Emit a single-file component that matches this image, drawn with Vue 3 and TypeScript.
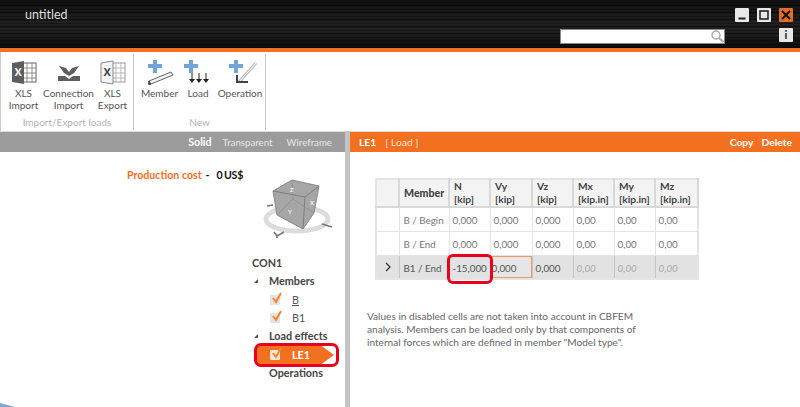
<script setup lang="ts">
interface Row { name: string; vals: string[]; active?: boolean }
const heads: [string, string][] = [['N','[kip]'],['Vy','[kip]'],['Vz','[kip]'],['Mx','[kip.in]'],['My','[kip.in]'],['Mz','[kip.in]']]
const rows: Row[] = [
  { name: 'B / Begin', vals: ['0,000','0,000','0,000','0,00','0,00','0,00'] },
  { name: 'B / End', vals: ['0,000','0,000','0,000','0,00','0,00','0,00'] },
  { name: 'B1 / End', vals: ['-15,000','0,000','0,000','0,00','0,00','0,00'], active: true },
]
</script>

<template>
  <div class="app">
    <header class="titlebar">
      <div class="title">untitled</div>
      <div class="win">
        <div class="winbtns">
          <span class="wb"><svg width="14" height="14" viewBox="0 0 14 14"><path d="M3.500 10.500h7" stroke="#222" stroke-width="2"/></svg></span>
          <span class="wb"><svg width="14" height="14" viewBox="0 0 14 14"><rect x="3" y="3" width="8" height="8" fill="none" stroke="#222" stroke-width="1.600"/></svg></span>
          <span class="wb close"><svg width="14" height="14" viewBox="0 0 14 14"><path d="M3 3l8 8M11 3l-8 8" stroke="#111" stroke-width="2"/></svg></span>
        </div>
        <div class="searchrow">
          <div class="search"><svg width="14" height="14" viewBox="0 0 14 14"><circle cx="6" cy="6" r="4" fill="none" stroke="#aaa" stroke-width="1.500"/><path d="M9 9l4.500 4" stroke="#aaa" stroke-width="2"/></svg></div>
          <span class="wb info">i</span>
        </div>
      </div>
    </header>
    <div class="ribbon">
      <section class="group g1">
        <div class="tools">
          <div class="tool t-xi">
            <svg width="26" height="26" viewBox="0 0 26 26"><rect x="11" y="3" width="14" height="19" fill="#fff" stroke="#666"/><path d="M16 3v19M21 3v19M11 8h14M11 13h14M11 18h14" stroke="#777" stroke-width=".8"/><path d="M1 3l12-2v23L1 22z" fill="#5e5e5e"/><text x="3.500" y="16" class="xl">X</text></svg>
            <span>XLS<br>Import</span>
          </div>
          <div class="tool t-ci">
            <svg width="26" height="26" viewBox="0 0 26 26"><path d="M2 16v5h22v-5h-7l-4 3-4-3z" fill="#5e5e5e"/><path d="M3 6l7 2 3 4 3-4 7-2-5 7-5 3-5-3z" fill="#5e5e5e"/></svg>
            <span>Connection<br>Import</span>
          </div>
          <div class="tool t-xe">
            <svg width="26" height="26" viewBox="0 0 26 26"><rect x="11" y="3" width="14" height="19" fill="#fff" stroke="#999"/><path d="M16 3v19M21 3v19M11 8h14M11 13h14M11 18h14" stroke="#aaa" stroke-width=".8"/><path d="M1 3l12-2v23L1 22z" fill="#f4f4f4" stroke="#888"/><text x="3.500" y="16" class="xl dark">X</text></svg>
            <span>XLS<br>Export</span>
          </div>
        </div>
        <div class="glabel">Import/Export loads</div>
      </section>
      <section class="group g2">
        <div class="tools">
          <div class="tool t-m">
            <svg width="30" height="26" viewBox="0 0 30 26"><path d="M8 0h4v4h5v4h-5v5H8V8H3V4h5z" fill="#6fa5d8"/><path d="M4 21l22-9 2 3-22 9z" fill="#f2f2f2" stroke="#666"/><path d="M4 21v3h2" fill="none" stroke="#333" stroke-width="1.500"/></svg>
            <span>Member</span>
          </div>
          <div class="tool t-l">
            <svg width="26" height="26" viewBox="0 0 26 26"><path d="M4 0h4v4h5v4H8v5H4V8H-1V4h5z" fill="#6fa5d8"/><path d="M7 13v8M14 13v8M21 13v8" stroke="#222"/><path d="M4 19l3 4 3-4zM11 19l3 4 3-4zM18 19l3 4 3-4z" fill="#222"/></svg>
            <span>Load</span>
          </div>
          <div class="tool t-o">
            <svg width="30" height="26" viewBox="0 0 30 26"><g transform="translate(2 0)"><path d="M7 0h4v4h5v4h-5v5H7V8H2V4h5z" fill="#6fa5d8"/><path d="M12 22L29 3" stroke="#bbb" stroke-width="3"/><path d="M12 22L29 3" stroke="#fff" stroke-width="1"/><path d="M10 15v7h11" fill="none" stroke="#444" stroke-width="2"/></g></svg>
            <span>Operation</span>
          </div>
        </div>
        <div class="glabel">New</div>
      </section>
    </div>
    <main class="content">
      <div class="left">
        <div class="lhead"><b>Solid</b><span>Transparent</span><span>Wireframe</span></div>
        <div class="lbody">
          <div class="cost"><span class="o">Production cost</span><i>-</i><b>0 US$</b></div>
          <svg class="cube" width="76" height="62" viewBox="0 0 76 62">
            <ellipse cx="37" cy="42" rx="31" ry="12" fill="none" stroke="#dcdcdc" stroke-width="5"/>
            <path d="M13 14L32 3l27 6-5 27-11 16-26-14z" fill="#a6a6a6" stroke="#8a8a8a"/>
            <path d="M13 14l32 6 14-11M45 20l-2 32" fill="none" stroke="#7d7d7d"/>
            <path d="M32 3l1 19M17 38l16-16 21 14" fill="none" stroke="#8e8e8e" stroke-width=".8"/>
            <path d="M7 29l6-1M62 47l10 3M24 55l-7 4M17 59l-3-4M17 59v2" stroke="#777" stroke-width="1.700" fill="none"/>
            <text x="28" y="37" class="ax">Y</text>
            <text x="30" y="15" class="ax">Z</text>
            <text x="50" y="28" class="ax">X</text>
          </svg>
          <div class="tree">
            <div class="con">CON1</div>
            <div class="node"><em class="tri"></em>Members</div>
            <div class="leaf"><span class="chk"><svg width="12" height="12" viewBox="0 0 12 12"><path d="M2 6l3 4 5-9" fill="none" stroke="#f5842b" stroke-width="2"/></svg></span><u>B</u></div>
            <div class="leaf"><span class="chk"><svg width="12" height="12" viewBox="0 0 12 12"><path d="M2 6l3 4 5-9" fill="none" stroke="#f5842b" stroke-width="2"/></svg></span>B1</div>
            <div class="node"><em class="tri"></em>Load effects</div>
            <div class="sel">
              <span class="chk on"><svg width="12" height="12" viewBox="0 0 12 12"><path d="M2 6l3 4 5-9" fill="none" stroke="#f5842b" stroke-width="2"/></svg></span><span class="seltext">LE1</span>
              <span class="ring"></span>
            </div>
            <div class="node plain">Operations</div>
          </div>
        </div>
        <span class="corner"></span>
      </div>
      <div class="right">
        <div class="rhead"><b>LE1</b><span class="typ">[ Load ]</span><span class="acts"><b>Copy</b><b>Delete</b></span></div>
        <div class="rbody">
          <div class="tablewrap">
            <table>
              <colgroup><col class="c0"><col class="c1"><col class="c2"><col class="c3"><col class="c4"><col class="c5"><col class="c6"><col class="c7"></colgroup>
              <thead>
                <tr>
                  <th></th><th class="mem">Member</th>
                  <th v-for="h in heads" :key="h[0]">{{ h[0] }}<br>{{ h[1] }}</th>
                </tr>
              </thead>
              <tbody>
                <tr v-for="r in rows" :key="r.name" :class="{ act: r.active }">
                  <td class="ind"><svg v-if="r.active" width="8" height="10" viewBox="0 0 8 10"><path d="M2 1l4 4-4 4" fill="none" stroke="#333" stroke-width="1.300"/></svg></td>
                  <td>{{ r.name }}</td>
                  <td v-for="(v, i) in r.vals" :key="i" :class="{ dis: r.active && i > 2, cur: r.active && i === 1 }">{{ v }}<span v-if="r.active && i === 0" class="ring2"></span></td>
                </tr>
              </tbody>
            </table>
          </div>
          <p class="note">Values in disabled cells are not taken into account in CBFEM analysis. Members can be loaded only by that components of internal forces which are defined in member "Model type".</p>
        </div>
      </div>
    </main>
  </div>
</template>

<style scoped>
.app { width: 800px; height: 407px; overflow: hidden; display: flex; flex-direction: column; background: #fff; font-family: Lato, "Open Sans", sans-serif; color: #444; }
.titlebar { height: 48px; flex: none; display: flex; justify-content: space-between; border-bottom: 4px solid #f37021; box-sizing: content-box;
  background:
    linear-gradient(180deg, rgba(0,0,0,.55) 0, rgba(0,0,0,.05) 45%, rgba(0,0,0,.05) 70%, rgba(0,0,0,.7) 100%),
    repeating-linear-gradient(180deg, #171717 0, #303030 1px, #121212 2px, #2a2a2a 4px, #0e0e0e 5px, #202020 7px); }
.title { color: #ddd; font-size: 12.5px; padding: 7px 0 0 25px; }
.win { width: 240px; display: flex; flex-direction: column; align-items: flex-end; padding: 8px 7px 0 0; box-sizing: border-box; }
.winbtns { display: flex; gap: 8px; }
.wb { width: 14px; height: 14px; background: #e8e8e8; border-radius: 1px; display: block; }
.wb svg { display: block; }
.wb.close { background: #e46c24; }
.searchrow { display: flex; margin-top: 6px; gap: 54px; align-items: flex-start; }
.search { width: 165px; height: 15px; margin-top: 1px; background: #fff; border: 1px solid #888; box-sizing: border-box; display: flex; justify-content: flex-end; }
.search svg { margin-top: -1px; }
.info { font-size: 11px; line-height: 14px; text-align: center; font-weight: 900; color: #333; }
.ribbon { height: 79px; flex: none; display: flex; background: #fff; box-sizing: border-box; border-left: 1px solid #ccc; }
.group { display: flex; flex-direction: column; border-right: 1px solid #c8c8c8; margin-top: 2px; height: 76px; box-sizing: border-box; }
.g1 { width: 133px; }
.g2 { width: 132px; }
.tools { flex: 1; display: flex; padding-top: 6px; }
.tool { display: flex; flex-direction: column; align-items: center; font-size: 10px; line-height: 12px; text-align: center; color: #555; }
.tool svg { margin-bottom: 1px; overflow: visible; flex: none; }
.t-xi { width: 43px; margin-left: 1px; }
.t-ci { width: 47px; }
.t-xe { width: 41px; }
.t-m { width: 49px; margin-left: 1px; }
.t-l { width: 28px; margin-left: 0; }
.t-o { width: 50px; margin-left: 3px; }
.xl { font: 700 11px "Open Sans", sans-serif; fill: #fff; }
.xl.dark { fill: #444; }
.glabel { font-size: 10px; color: #b4b4b4; text-align: center; height: 14px; line-height: 12px; }
.content { flex: 1; display: flex; min-height: 0; }
.left { width: 345px; flex: none; display: flex; flex-direction: column; position: relative; }
.lhead { height: 21px; background: #9c9c9c; color: #e6e6e6; font-size: 9.7px; display: flex; justify-content: flex-end; align-items: center; gap: 14px; padding-right: 13px; border-top: 1px solid #ddd; box-sizing: border-box; }
.lhead b { color: #fff; font-weight: 700; font-size: 10.6px; margin-right: -3px; }
.lbody { flex: 1; position: relative; }
.cost { position: absolute; left: 127px; top: 17px; font-size: 10.6px; font-weight: 700; display: flex; gap: 4px; color: #111; }
.cost .o { color: #f37021; font-weight: 700; }
.cost i { font-style: normal; margin-right: 3px; }
.cost b { font-weight: 700; letter-spacing: -.2px; word-spacing: -1px; }
.cube { position: absolute; left: 260px; top: 25px; overflow: visible; }
.ax { font: 700 6px Lato, sans-serif; fill: #f2f2f2; }
.tree { position: absolute; left: 252px; top: 102px; width: 90px; font-size: 10.8px; font-weight: 700; color: #444; }
.con { height: 18px; line-height: 18px; }
.node { height: 19px; line-height: 17px; padding-left: 17px; position: relative; white-space: nowrap; }
.plain { height: 18px; line-height: 15px; }
.tri { position: absolute; left: 2px; top: 7px; border-style: solid; border-width: 0 0 4px 4px; border-color: transparent transparent #555 transparent; }
.leaf { height: 18px; line-height: 18px; font-weight: 400; display: flex; align-items: center; padding-left: 18px; color: #555; }
.leaf u { text-decoration: underline; }
.chk { width: 10px; height: 10px; background: #e4e4e4; border-radius: 1px; display: inline-block; margin-right: 12px; position: relative; flex: none; }
.chk svg { position: absolute; left: 1px; top: -3px; }
.sel { position: relative; height: 18px; line-height: 18px; margin: 0 0 1px 5px; width: 77px; color: #fff; padding-left: 13px; box-sizing: border-box; display: flex; align-items: center; }
.sel::before { content: ""; position: absolute; inset: 0; background: #f37021; clip-path: polygon(0 0, 84% 0, 100% 50%, 84% 100%, 0 100%); }
.seltext { position: relative; }
.chk.on { background: #fbe6d6; }
.ring { position: absolute; left: -3px; top: -3px; width: 85px; height: 24px; box-sizing: border-box; border: 3px solid #e8001c; border-radius: 7px; z-index: 2; }
.corner { position: absolute; left: 0; bottom: 0; width: 15px; height: 4px; background: #7fa6d0; clip-path: polygon(0 0, 100% 100%, 0 100%); }
.right { flex: 1; border-left: 5px solid #c4c4c4; display: flex; flex-direction: column; }
.rhead { height: 21px; background: #f37021; color: #fff; font-size: 10.3px; display: flex; align-items: center; padding: 0 8px 0 9px; border-top: 1px solid #ddd; box-sizing: border-box; }
.typ { margin-left: 9px; color: #fde3d2; }
.acts { margin-left: auto; display: flex; gap: 8px; }
.rbody { flex: 1; padding: 26px 0 0 17px; }
.tablewrap { margin-left: 8px; width: 322px; }
table { border-collapse: collapse; table-layout: fixed; width: 322px; font-size: 9.8px; color: #777; border: 2px solid #e4e4e4; }
.c0 { width: 23px; } .c1 { width: 50px; } .c2 { width: 41px; } .c3 { width: 42px; } .c4 { width: 41px; } .c5 { width: 41px; } .c6 { width: 41px; } .c7 { width: 43px; }
th { background: #f3f3f3; height: 28px; box-sizing: border-box; padding: 0 0 0 4px; text-align: left; font-weight: 700; font-size: 10.2px; line-height: 13px; color: #444; border: 1px solid #d8d8d8; border-width: 0 2px 2px 0; }
th.mem { font-weight: 900; font-size: 10.6px; }
td { height: 24px; padding: 2px 0 0 3px; border: 1px solid #e4e4e4; border-width: 0 1px 1px 0; white-space: nowrap; overflow: visible; position: relative; box-sizing: border-box; }
td:nth-child(2) { padding-left: 4px; }
.ind { padding: 0; text-align: center; }
.ind svg { display: block; margin: 0 auto; }
.act td { background: #e2e2e2; border-color: #c4c4c4; color: #555; }
.act td.dis { color: #aaa; font-style: italic; }
.act td.cur { box-shadow: inset 0 0 0 1px #ec9a66; background: #e6e6e6; padding-left: 1px; }
.ring2 { position: absolute; left: -3px; top: -2px; width: 46px; height: 30px; border: 3px solid #e8001c; border-radius: 6px; box-sizing: border-box; z-index: 2; }
.note { margin: 30px 0 0; width: 285px; font-size: 10.1px; line-height: 13px; color: #666; }
</style>
